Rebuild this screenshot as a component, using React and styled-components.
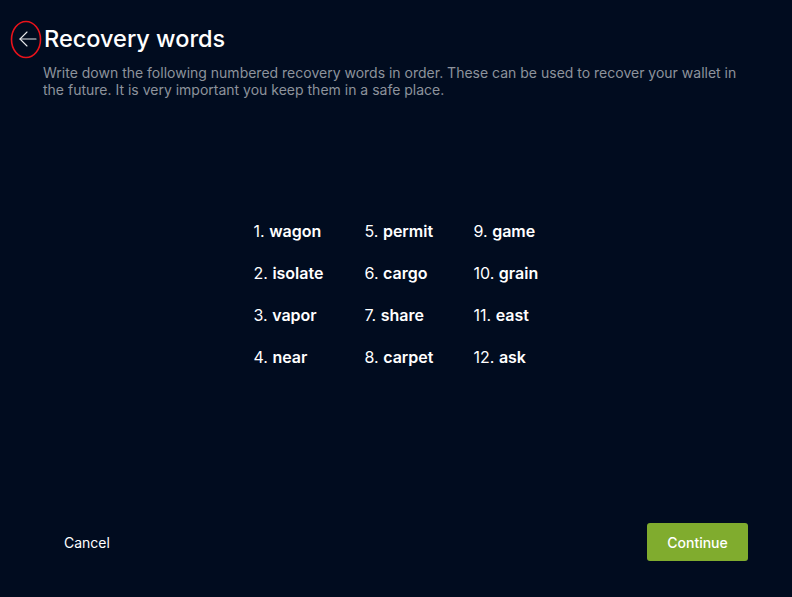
import React from 'react'
import styled, { createGlobalStyle } from 'styled-components'

const words = [
  'wagon', 'isolate', 'vapor', 'near',
  'permit', 'cargo', 'share', 'carpet',
  'game', 'grain', 'east', 'ask',
]

const GlobalStyle = createGlobalStyle`
  html, body {
    margin: 0;
    padding: 0;
    background: #010c1f;
  }
  body {
    font-family: Inter, "Noto Sans", sans-serif;
    color: #ffffff;
  }
`

const Page = styled.div`
  width: 792px;
  height: 597px;
  box-sizing: border-box;
  display: flex;
  flex-direction: column;
  padding: 24px 44px 36px 43px;
`

const Header = styled.div`
  display: flex;
  align-items: center;
  margin-left: -27px;
  gap: 4px;
`

const BackButton = styled.button`
  position: relative;
  width: 24px;
  height: 30px;
  padding: 0;
  border: none;
  background: none;
  color: #e6e8eb;
  display: flex;
  align-items: center;
  justify-content: center;
  cursor: pointer;
`

const Marker = styled.svg`
  position: absolute;
  left: -6px;
  top: -4px;
  pointer-events: none;
`

const Title = styled.h1`
  margin: 0;
  font-size: 23.5px;
  font-weight: 500;
  line-height: 30px;
  color: #ffffff;
`

const Description = styled.p`
  margin: 10px 0 0;
  font-size: 14px;
  line-height: 17px;
  color: #8d939c;
  max-width: 710px;
`

const Body = styled.div`
  flex: 1;
  display: flex;
  justify-content: center;
  padding-top: 123px;
`

const WordGrid = styled.ol`
  list-style: none;
  margin: 0;
  padding: 0 0 0 16px;
  display: grid;
  grid-template-rows: repeat(4, 42px);
  grid-auto-flow: column;
  grid-template-columns: 111px 109px 80px;
  align-content: start;
`

const Word = styled.li`
  font-size: 16px;
  line-height: 20px;
  color: #ffffff;
  white-space: nowrap;

  span {
    font-weight: 400;
  }

  strong {
    font-weight: 600;
  }
`

const Footer = styled.div`
  display: flex;
  justify-content: space-between;
  align-items: center;
`

const TextButton = styled.button`
  border: none;
  background: none;
  color: #ffffff;
  font-family: inherit;
  font-size: 14px;
  padding: 10px 21px;
  cursor: pointer;
`

const PrimaryButton = styled.button`
  border: none;
  border-radius: 3px;
  background: #80ac2e;
  color: #ffffff;
  font-family: inherit;
  font-size: 14px;
  font-weight: 500;
  height: 38px;
  width: 101px;
  cursor: pointer;
`

export default function App() {
  return (
    <>
      <GlobalStyle />
      <Page>
        <Header>
          <BackButton aria-label="Back">
            <svg width="20" height="20" viewBox="0 0 20 20" fill="none" stroke="currentColor" strokeWidth="1.1" strokeLinecap="round" strokeLinejoin="round">
              <path d="M18 10H2" />
              <path d="M9 3L2 10L9 17" />
            </svg>
            <Marker width="34" height="40" viewBox="0 0 34 40">
              <ellipse cx="16" cy="19.5" rx="14.5" ry="18" fill="none" stroke="#e8131b" strokeWidth="1.6" />
            </Marker>
          </BackButton>
          <Title>Recovery words</Title>
        </Header>
        <Description>
          Write down the following numbered recovery words in order. These can be used to recover your wallet in the future. It is very important you keep them in a safe place.
        </Description>
        <Body>
          <WordGrid>
            {words.map((w, i) => (
              <Word key={w}>
                <span>{i + 1}. </span>
                <strong>{w}</strong>
              </Word>
            ))}
          </WordGrid>
        </Body>
        <Footer>
          <TextButton>Cancel</TextButton>
          <PrimaryButton>Continue</PrimaryButton>
        </Footer>
      </Page>
    </>
  )
}
